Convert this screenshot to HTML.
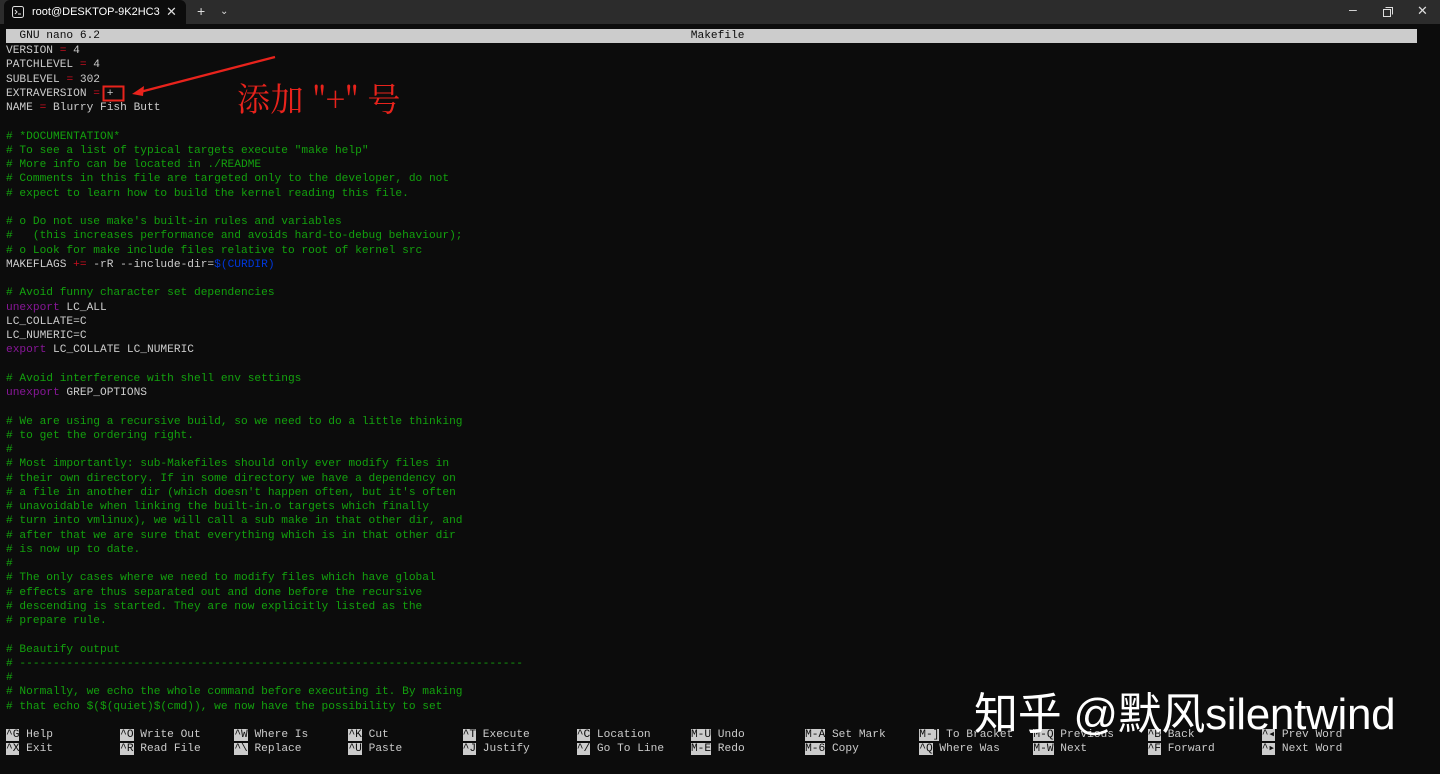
<!DOCTYPE html>
<html><head><meta charset="utf-8"><style>
*{margin:0;padding:0;box-sizing:border-box}
body{width:1440px;height:774px;background:#0c0c0c;overflow:hidden;position:relative;font-family:"Liberation Mono",monospace}
.tb{position:absolute;left:0;top:0;width:1440px;height:24px;background:#2c2c2c}
.tab{position:absolute;left:4px;top:0;width:182px;height:24px;background:#0c0c0c;border-radius:6px 6px 0 0}
.tt{position:absolute;left:28px;top:0;width:128px;overflow:hidden;white-space:nowrap;color:#fff;font:11px "Liberation Sans",sans-serif;line-height:24px}
.ic{position:absolute;color:#ddd;font:14px "Liberation Sans",sans-serif;top:3px}
.hdr{position:absolute;left:6px;top:29px;width:1411px;height:14px;background:#cccccc;color:#0c0c0c;font-size:11.2px;line-height:14px;white-space:pre}
pre{position:absolute;left:6px;top:44px;font-family:"Liberation Mono",monospace;font-size:11.2px;line-height:14.25px;color:#cccccc}
.g{color:#13a10e}.p{color:#881798}.r{color:#c50f1f}.b{color:#0037da}
.k{background:#cccccc;color:#0c0c0c}
.ann{position:absolute;left:237px;top:74px;color:#e8231c;font:33px "Noto Serif CJK SC",serif;letter-spacing:0.5px}
.wm{position:absolute;left:974px;top:678px;color:#fff;font:44px "Liberation Sans","Noto Sans CJK SC",sans-serif;letter-spacing:-0.3px}
</style></head><body>
<div class="tb"><div class="tab"><div class="tt">root@DESKTOP-9K2HC35: ~/l</div><span style="position:absolute;left:162px;top:4px;color:#ddd;font:13px 'Liberation Sans',sans-serif">✕</span></div>
<svg style="position:absolute;left:12px;top:6px" width="12" height="12"><rect x="0.5" y="0.5" width="11" height="11" rx="2" fill="none" stroke="#ddd"/><path d="M3 4l2 2-2 2M6 8h3" stroke="#ddd" fill="none"/></svg>
<span class="ic" style="left:197px">+</span><span class="ic" style="left:220px;font-size:10px;top:6px">⌄</span>
<span class="ic" style="left:1349px;top:1px">–</span>
<svg style="position:absolute;left:1383px;top:7px" width="10" height="10"><rect x="0.5" y="2.5" width="7" height="7" fill="none" stroke="#ddd"/><path d="M2.5 .5h7v7" fill="none" stroke="#ddd"/></svg>
<span class="ic" style="left:1417px;top:3px;font-size:13px">✕</span></div>
<div class="hdr">  GNU nano 6.2                                                                                        Makefile</div>
<pre>VERSION <span class="r">=</span> 4
PATCHLEVEL <span class="r">=</span> 4
SUBLEVEL <span class="r">=</span> 302
EXTRAVERSION <span class="r">=</span> +
NAME <span class="r">=</span> Blurry Fish Butt

<span class="g"># *DOCUMENTATION*
# To see a list of typical targets execute "make help"
# More info can be located in ./README
# Comments in this file are targeted only to the developer, do not
# expect to learn how to build the kernel reading this file.

# o Do not use make's built-in rules and variables
#   (this increases performance and avoids hard-to-debug behaviour);
# o Look for make include files relative to root of kernel src</span>
MAKEFLAGS <span class="r">+=</span> -rR --include-dir=<span class="b">$(CURDIR)</span>

<span class="g"># Avoid funny character set dependencies</span>
<span class="p">unexport</span> LC_ALL
LC_COLLATE=C
LC_NUMERIC=C
<span class="p">export</span> LC_COLLATE LC_NUMERIC

<span class="g"># Avoid interference with shell env settings</span>
<span class="p">unexport</span> GREP_OPTIONS

<span class="g"># We are using a recursive build, so we need to do a little thinking
# to get the ordering right.
#
# Most importantly: sub-Makefiles should only ever modify files in
# their own directory. If in some directory we have a dependency on
# a file in another dir (which doesn't happen often, but it's often
# unavoidable when linking the built-in.o targets which finally
# turn into vmlinux), we will call a sub make in that other dir, and
# after that we are sure that everything which is in that other dir
# is now up to date.
#
# The only cases where we need to modify files which have global
# effects are thus separated out and done before the recursive
# descending is started. They are now explicitly listed as the
# prepare rule.

# Beautify output
# ---------------------------------------------------------------------------
#
# Normally, we echo the whole command before executing it. By making
# that echo $($(quiet)$(cmd)), we now have the possibility to set</span>

<span class="k">^G</span> Help          <span class="k">^O</span> Write Out     <span class="k">^W</span> Where Is      <span class="k">^K</span> Cut           <span class="k">^T</span> Execute       <span class="k">^C</span> Location      <span class="k">M-U</span> Undo         <span class="k">M-A</span> Set Mark     <span class="k">M-]</span> To Bracket   <span class="k">M-Q</span> Previous     <span class="k">^B</span> Back          <span class="k">^◂</span> Prev Word
<span class="k">^X</span> Exit          <span class="k">^R</span> Read File     <span class="k">^\</span> Replace       <span class="k">^U</span> Paste         <span class="k">^J</span> Justify       <span class="k">^/</span> Go To Line    <span class="k">M-E</span> Redo         <span class="k">M-6</span> Copy         <span class="k">^Q</span> Where Was     <span class="k">M-W</span> Next         <span class="k">^F</span> Forward       <span class="k">^▸</span> Next Word</pre>
<svg style="position:absolute;left:0;top:0" width="1440" height="774">
<rect x="103.5" y="86.5" width="20" height="14" fill="none" stroke="#e8231c" stroke-width="2"/>
<line x1="275" y1="57" x2="140" y2="92" stroke="#e8231c" stroke-width="2.2"/>
<path d="M132 94l12-8-1 10z" fill="#e8231c"/>
</svg>
<div class="ann">添加 "+" 号</div>
<div class="wm">知乎 @默风silentwind</div>
</body></html>
